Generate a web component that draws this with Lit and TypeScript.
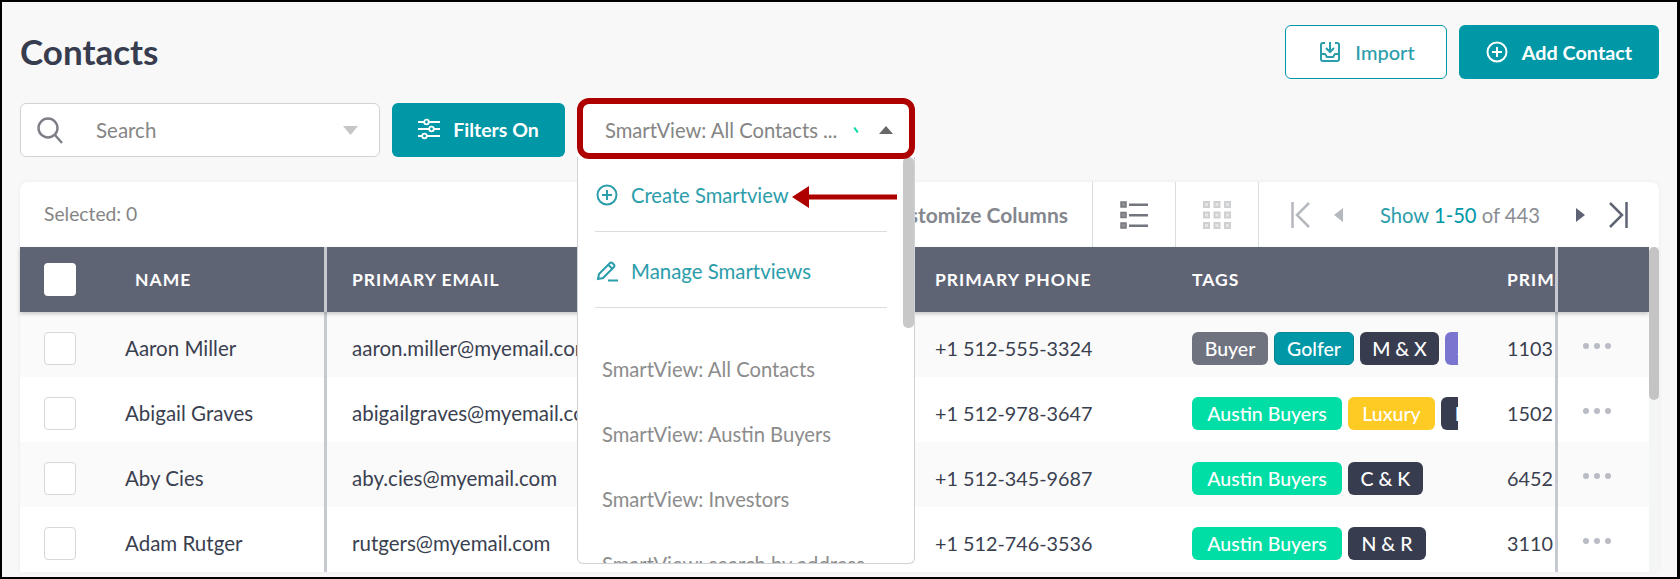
import { LitElement, html, css } from "lit";
import { customElement } from "lit/decorators.js";

const rows = [
  { name: "Aaron Miller", email: "aaron.miller@myemail.com", phone: "+1 512-555-3324", prim: "1103", tags: [["Buyer","buyer",76],["Golfer","golfer",80],["M & X","dark",79],["Sellers","purple",80]] },
  { name: "Abigail Graves", email: "abigailgraves@myemail.com", phone: "+1 512-978-3647", prim: "1502", tags: [["Austin Buyers","green",150],["Luxury","yellow",87],["D & L","dark",76]] },
  { name: "Aby Cies", email: "aby.cies@myemail.com", phone: "+1 512-345-9687", prim: "6452", tags: [["Austin Buyers","green",150],["C & K","dark",75]] },
  { name: "Adam Rutger", email: "rutgers@myemail.com", phone: "+1 512-746-3536", prim: "3110", tags: [["Austin Buyers","green",150],["N & R","dark",78]] },
];

const plus = (cls: string) => html`<svg class=${cls} viewBox="0 0 22 22" fill="none" stroke="currentColor" stroke-width="2"><circle cx="11" cy="11" r="9.500"/><path d="M11 6v10M6 11h10"/></svg>`;

@customElement("app-root")
export class AppRoot extends LitElement {
  static styles = css`
    :host { display: block; box-sizing: border-box; height: 579px; overflow: hidden; border: 2px solid #000; border-right-width: 3px; background: #f8f8f8; font-family: "Lato", "Noto Sans", sans-serif; color: #3a3f50; }
    .page { padding: 23px 18px 0 18px; display: flex; flex-direction: column; }
    .head { display: flex; align-items: center; justify-content: space-between; height: 54px; }
    h1 { margin: 0 0 2px; font-size: 35px; font-weight: 700; color: #373c4f; }
    .actions { display: flex; gap: 12px; }
    .btn { box-sizing: border-box; height: 54px; border-radius: 6px; display: flex; align-items: center; justify-content: center; font-size: 20px; font-weight: 500; }
    .teal { background: #0097a7; color: #fff; font-weight: 700; }
    .outline { background: #fff; color: #2b9dab; border: 1.5px solid #0097a7; }
    .import { width: 162px; gap: 14px; padding-left: 2px; }
    .add { width: 200px; gap: 14px; font-size: 19.800px; }
    .ic22 { width: 22px; height: 22px; }
    .filterbar { display: flex; margin-top: 24px; height: 54px; }
    .search { box-sizing: border-box; width: 360px; height: 54px; background: #fff; border: 1.5px solid #cfd3d8; border-radius: 6px; display: flex; align-items: center; padding: 0 21px 0 16px; color: #868686; font-size: 20.500px; }
    .search .q { width: 26px; height: 27px; color: #7c7f85; }
    .search span { margin-left: 33px; flex: 1; }
    .caretd { width: 15px; height: 9px; fill: #c6c6c6; }
    .filters { width: 173px; margin-left: 12px; gap: 13px; font-size: 19.500px; padding-bottom: 2px; }
    .select { position: relative; margin-left: 12px; width: 338px; height: 54px; background: #fff; }
    .select-in { height: 54px; display: flex; align-items: center; padding-left: 28px; box-sizing: border-box; font-size: 20.200px; color: #858585; }
    .select-in .txt { width: 250px; white-space: nowrap; }
    .sliver { width: 2px; height: 6px; background: #00dea6; transform: rotate(-35deg); }
    .caretu { width: 14px; height: 8px; fill: #686868; margin-left: 22px; }
    .hl { position: absolute; left: 0; right: 0; top: -5px; bottom: -2px; border: 6px solid #af0000; border-radius: 12px; pointer-events: none; z-index: 3; }
    .drop { position: absolute; z-index: 2; left: 0; top: 54px; box-sizing: border-box; width: 338px; height: 407px; background: #fff; border: 1.5px solid #cfd3d8; border-top: 0; border-radius: 0 0 6px 6px; overflow: hidden; }
    .opt { height: 75px; display: flex; align-items: center; gap: 13px; margin: 0 27px 0 17px; padding: 1px 0 0 1px; border-bottom: 1.5px solid #dcdcdc; color: #2b9dab; font-size: 20.200px; box-sizing: border-box; }
    .opt svg { width: 22px; height: 22px; flex: none; }
    .opt.m { height: 76px; padding-top: 2px; font-size: 20.400px; }
    .list { padding-top: 28px; }
    .item { height: 65px; display: flex; align-items: center; padding-left: 24px; font-size: 20.200px; color: #8c8c8c; white-space: nowrap; }
    .thumb { position: absolute; right: 0; top: 0; width: 11px; height: 171px; background: #c8c8c8; border-radius: 5px; }
    .arrow { position: absolute; z-index: 4; left: 215px; top: 83px; width: 105px; height: 22px; fill: #af0000; }
    .card { margin-top: 25px; background: #fff; border-radius: 8px 8px 0 0; box-shadow: 0 0 4px rgba(0,0,0,.06); }
    .tools { height: 65px; display: flex; align-items: center; color: #858585; font-size: 19.300px; }
    .sel { margin-left: 24px; flex: 1; padding-bottom: 2px; }
    .cust { font-size: 21px; font-weight: 700; color: #84878e; white-space: nowrap; padding-right: 24px; }
    .tb { box-sizing: border-box; width: 83px; height: 65px; border-left: 1px solid #dcdde0; display: flex; align-items: center; justify-content: center; }
    .tb svg { width: 28px; height: 28px; }
    .pager { box-sizing: border-box; width: 401px; height: 65px; border-left: 1px solid #dcdde0; display: flex; align-items: center; padding-left: 32px; }
    .pager svg { flex: none; }
    .show { margin-left: 37px; width: 159px; white-space: nowrap; font-size: 20.200px; color: #8a8d94; margin-right: 37px; }
    .show b { color: #0097a7; font-weight: 400; }
    .show i { color: #2b9dab; font-style: normal; }
    .tablewrap { display: flex; }
    .table { width: 1629px; flex: none; }
    .sb { flex: 1; background: #f4f5f5; position: relative; }
    .sb::after { content: ""; position: absolute; left: 0; right: 0; top: 0; height: 153px; background: #c4c4c4; border-radius: 5px; }
    .row { display: grid; grid-template-columns: 307px 588px 256px 315px 72px 91px; height: 65px; align-items: center; font-size: 20.500px; }
    .row.hd { background: #5f6475; color: #fff; font-weight: 700; font-size: 17.500px; letter-spacing: 1px; box-shadow: 0 2px 4px rgba(0,0,0,.2); position: relative; }
    .row:nth-child(even) { background: #fafafa; }
    .row:nth-child(odd):not(.hd) { background: #fff; }
    .cell { height: 100%; display: flex; align-items: center; box-sizing: border-box; white-space: nowrap; min-width: 0; overflow: hidden; }
    .row:not(.hd) .cell { padding-top: 7px; }
    .first { border-right: 3px solid #c6cad0; padding-left: 24px; }
    .cb { box-sizing: border-box; width: 32px; height: 33px; border: 1.5px solid #d5d7db; border-radius: 4px; background: #fff; flex: none; }
    .hd .cb { border: 0; }
    .first .nm { margin-left: 49px; }
    .hd .first .nm { margin-left: 59px; }
    .pad { padding-left: 25px; }
    .phone { padding-left: 20px; }
    .row:not(.hd) .phone { font-size: 19.800px; }
    .tagc { padding-left: 21px; }
    .tags { width: 266px; display: flex; gap: 6px; overflow: hidden; }
    .tag { box-sizing: border-box; height: 33px; border-radius: 6px; display: flex; align-items: center; justify-content: center; color: #fff; font-size: 19.500px; flex: none; font-weight: 500; border: 1px solid transparent; overflow: hidden; }
    .buyer { background: #6f7380; }
    .golfer { background: #0097a7; border-color: #078392; }
    .dark { background: #373c4f; }
    .purple { background: #7a75cf; }
    .green { background: #00dea6; }
    .yellow { background: #fdcb23; }
    .prim { padding-left: 21px; border-right: 3px solid #c6cad0; }
    .row:not(.hd) .prim { font-size: 19.800px; }
    .row:not(.hd) .dots { padding-left: 25px; gap: 5px; padding-top: 3px; }
    .dots i { width: 6px; height: 6px; border-radius: 50%; background: #b9bcc4; }
  `;

  render() {
    return html`<div class="page">
      <div class="head">
        <h1>Contacts</h1>
        <div class="actions">
          <div class="btn outline import">
            <svg class="ic22" viewBox="0 0 22 22" fill="none" stroke="currentColor" stroke-width="2"><path d="M6 2H4a2 2 0 0 0-2 2v14a2 2 0 0 0 2 2h14a2 2 0 0 0 2-2V4a2 2 0 0 0-2-2h-2"/><path d="M11 1v9M7 7l4 4 4-4M2 13h4l2 3h6l2-3h4"/></svg>
            <span>Import</span>
          </div>
          <div class="btn teal add">${plus("ic22")}<span>Add Contact</span></div>
        </div>
      </div>
      <div class="filterbar">
        <div class="search">
          <svg class="q" viewBox="0 0 26 27" fill="none" stroke="currentColor" stroke-width="2.400"><circle cx="11" cy="11" r="9.500"/><path d="M18 18l7 8"/></svg>
          <span>Search</span>
          <svg class="caretd" viewBox="0 0 15 9"><path d="M0 0h15L7.500 9z"/></svg>
        </div>
        <div class="btn teal filters">
          <svg class="ic22" viewBox="0 0 22 20" fill="none" stroke="currentColor" stroke-width="1.800"><path d="M0 3h6M11 3h11M0 10h11M16 10h6M0 17h4M9 17h13"/><circle cx="8.500" cy="3" r="2.300"/><circle cx="13.500" cy="10" r="2.300"/><circle cx="6.500" cy="17" r="2.300"/></svg>
          <span>Filters On</span>
        </div>
        <div class="select">
          <div class="select-in">
            <span class="txt">SmartView: All Contacts ...</span>
            <i class="sliver"></i>
            <svg class="caretu" viewBox="0 0 14 8"><path d="M0 8h14L7 0z"/></svg>
          </div>
          <div class="hl"></div>
          <div class="drop">
            <div class="opt">${plus("")}<span>Create Smartview</span></div>
            <div class="opt m">
              <svg viewBox="0 0 22 22" fill="none" stroke="currentColor" stroke-width="2"><path d="M2 19l1-5L14 3a1.600 1.600 0 0 1 2.300 0l1.700 1.700a1.600 1.600 0 0 1 0 2.300L7 18zM12.500 5l4.500 4.500M12 20.500h10"/></svg>
              <span>Manage Smartviews</span>
            </div>
            <div class="list">
              <div class="item">SmartView: All Contacts</div>
              <div class="item">SmartView: Austin Buyers</div>
              <div class="item">SmartView: Investors</div>
              <div class="item">SmartView: search by address</div>
            </div>
            <div class="thumb"></div>
          </div>
          <svg class="arrow" viewBox="0 0 105 22"><path d="M0 11L17 0v8.500h88v5H17V22z"/></svg>
        </div>
      </div>
      <div class="card">
        <div class="tools">
          <span class="sel">Selected: 0</span>
          <span class="cust">Customize Columns</span>
          <div class="tb"><svg viewBox="0 0 28 28"><path fill="#8d8f95" stroke="#77797f" stroke-width="1.500" d="M1 1h5v5H1zM1 11.500h5v5H1zM1 22h5v5H1z"/><path fill="#72757e" d="M9 2.500h19v2.500H9zM9 13h19v2.500H9zM9 23.500h19v2.500H9z"/></svg></div>
          <div class="tb"><svg viewBox="0 0 28 28" fill="#e4e5e6" stroke="#cfd0d2" stroke-width="2"><path d="M1 1h5v5H1zM11.500 1h5v5h-5zM22 1h5v5h-5zM1 11.500h5v5H1zM11.500 11.500h5v5h-5zM22 11.500h5v5h-5zM1 22h5v5H1zM11.500 22h5v5h-5zM22 22h5v5h-5z"/></svg></div>
          <div class="pager">
            <svg width="19" height="26" viewBox="0 0 19 26" fill="none" stroke="#b5b8be" stroke-width="2.500"><path d="M1.500 0v26M18 1L6 13l12 12"/></svg>
            <svg style="margin-left:24px" width="9" height="14" viewBox="0 0 9 14" fill="#b5b8be"><path d="M9 0v14L0 7z"/></svg>
            <span class="show"><i>Show </i><b>1-50</b> of 443</span>
            <svg width="9" height="14" viewBox="0 0 9 14" fill="#5f6475"><path d="M0 0v14l9-7z"/></svg>
            <svg style="margin-left:24px" width="19" height="26" viewBox="0 0 19 26" fill="none" stroke="#5f6475" stroke-width="2.500"><path d="M17.500 0v26M1 1l12 12L1 25"/></svg>
          </div>
        </div>
        <div class="tablewrap">
          <div class="table">
            <div class="row hd">
              <div class="cell first"><span class="cb"></span><span class="nm">NAME</span></div>
              <div class="cell pad">PRIMARY EMAIL</div>
              <div class="cell phone">PRIMARY PHONE</div>
              <div class="cell tagc">TAGS</div>
              <div class="cell prim">PRIMARY ADDRESS</div>
              <div class="cell"></div>
            </div>
            ${rows.map((r) => html`<div class="row">
              <div class="cell first"><span class="cb"></span><span class="nm">${r.name}</span></div>
              <div class="cell pad">${r.email}</div>
              <div class="cell phone">${r.phone}</div>
              <div class="cell tagc"><div class="tags">${r.tags.map((t) => html`<span class="tag ${t[1]}" style="width:${t[2]}px">${t[0]}</span>`)}</div></div>
              <div class="cell prim">${r.prim} Main Street</div>
              <div class="cell dots"><i></i><i></i><i></i></div>
            </div>`)}
          </div>
          <div class="sb"></div>
        </div>
      </div>
    </div>`;
  }
}
